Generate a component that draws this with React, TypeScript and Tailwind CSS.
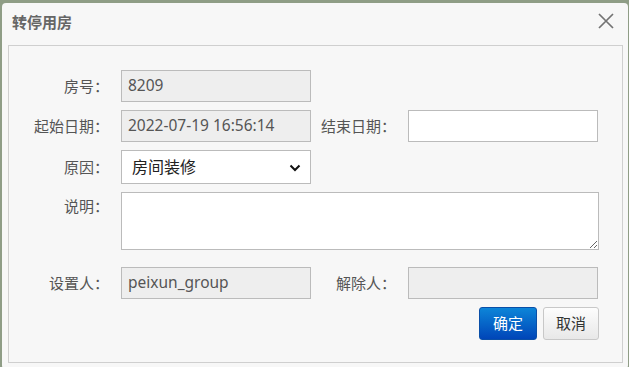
const cjk = { fontFamily: '"Noto Sans", "Noto Sans CJK SC", sans-serif' };

function Label({ children, top }: { children: string; top?: boolean }) {
  return (
    <div
      className={`flex justify-end whitespace-nowrap pr-[1px] text-[15px] leading-none text-[#555] ${top ? "self-start pt-[7px]" : "self-center"}`}
    >
      <span>{children}</span>
    </div>
  );
}

function ReadOnly({ value }: { value: string }) {
  return (
    <div className="flex h-[32px] items-center border border-[#bbb] bg-[#eee] px-[6px] text-[15.5px] text-[#555]">
      {value}
    </div>
  );
}

export default function App() {
  return (
    <div className="h-[367px] w-[629px] overflow-hidden bg-[#8f9d86] pt-[3px] pl-[2px]" style={cjk}>
      <div className="flex h-[366px] w-[626px] flex-col rounded-[4px] bg-[#f7f7f7]">
        {/* header */}
        <div className="flex h-[38px] items-center justify-between pl-[10px] pr-[14px]">
          <h3 className="text-[15px] font-bold text-[#666]">转停用房</h3>
          <svg width="16" height="16" viewBox="0 0 16 16" className="mt-[-2px]">
            <path d="M1 1 L15 15 M15 1 L1 15" stroke="#737373" strokeWidth="1.7" fill="none" />
          </svg>
        </div>

        {/* body */}
        <div className="ml-[6px] mt-[4px] h-[318px] w-[615px] border border-[#cfcfcf] bg-[#f7f7f7] pt-[24px]">
          <div className="grid grid-cols-[101px_190px_75px_190px] gap-x-[11px] gap-y-[8px]">
            <Label>房号：</Label>
            <ReadOnly value="8209" />
            <div />
            <div />

            <Label>起始日期：</Label>
            <ReadOnly value="2022-07-19 16:56:14" />
            <Label>结束日期：</Label>
            <div className="h-[32px] border border-[#bbb] bg-white" />

            <Label>原因：</Label>
            <div className="flex h-[34px] items-center justify-between border border-[#bbb] bg-white pl-[10px] pr-[9px] text-[16px] text-[#222]">
              <span>房间装修</span>
              <svg width="12" height="8" viewBox="0 0 12 8" className="mt-[1px]">
                <path d="M1.5 1.5 L6 6 L10.5 1.5" fill="none" stroke="#111" strokeWidth="2" />
              </svg>
            </div>
            <div />
            <div />

            <Label top>说明：</Label>
            <textarea className="col-span-3 h-[58px] w-[478px] border border-[#bbb] bg-white outline-none" />
          </div>

          <div className="mt-[17px] grid grid-cols-[101px_190px_75px_190px] gap-x-[11px]">
            <Label>设置人：</Label>
            <ReadOnly value="peixun_group" />
            <Label>解除人：</Label>
            <div className="h-[32px] border border-[#bbb] bg-[#eee]" />
          </div>

          <div className="mt-[8px] flex justify-end gap-[6px] pr-[23px]">
            <button
              type="button"
              className="h-[33px] w-[58px] rounded-[3px] border border-[#0a4fa8] bg-[linear-gradient(#0d85d8,#0045b8)] text-[15px] text-white"
            >
              确定
            </button>
            <button
              type="button"
              className="h-[33px] w-[56px] rounded-[3px] border border-[#c8c8c8] bg-[linear-gradient(#fdfdfd,#e8e8e8)] text-[15px] text-[#333]"
            >
              取消
            </button>
          </div>
        </div>
      </div>
    </div>
  );
}
